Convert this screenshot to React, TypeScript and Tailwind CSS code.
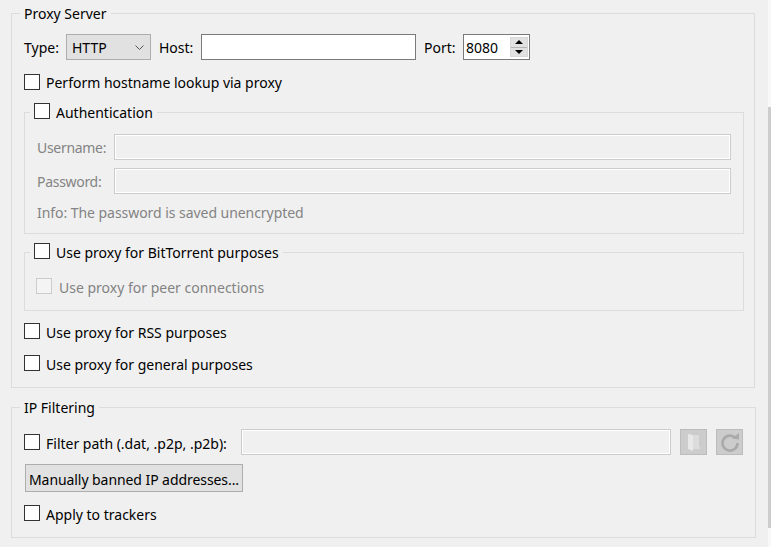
import type { ReactNode } from "react";

function Check({ label, dim }: { label: string; dim?: boolean }) {
  return (
    <label className={dim ? "flex h-5 items-center gap-[7px] text-[#838383]" : "flex h-5 items-center gap-[6px]"}>
      <span className={dim ? "h-4 w-4 shrink-0 border border-[#cccccc] bg-[#f4f4f4]" : "h-4 w-4 shrink-0 border border-[#333333] bg-white"}></span>
      <span className="h-5">{label}</span>
    </label>
  );
}

function Group({ title, className, children }: { title: ReactNode; className: string; children: ReactNode }) {
  return (
    <fieldset className={"border border-[#dcdcdc] " + className}>
      {title}
      {children}
    </fieldset>
  );
}

function DimInput({ className }: { className: string }) {
  return <div className={"h-[26px] border border-[#cccccc] bg-[#f0f0f0] shadow-[inset_0_0_0_1px_#ffffff] " + className}></div>;
}

export default function App() {
  return (
    <div className="relative h-[547px] w-[771px] overflow-hidden bg-[#f0f0f0] pl-[11px] pt-[3px] font-['Noto_Sans',sans-serif] text-[14px] leading-[22px] text-[#000000]">
      <Group
        className="h-[385px] w-[744px] pl-3 pr-[10px]"
        title={<legend className="-ml-1 h-5 px-1">Proxy Server</legend>}
      >
        <div className="mt-[11px] flex h-[26px] items-center">
          <span className="h-5 w-[42px]">Type:</span>
          <div className="flex h-[26px] w-[85px] items-center justify-between border border-[#adadad] bg-[#e1e1e1] pl-[5px] pr-[6px]">
            <span className="h-5">HTTP</span>
            <svg width="9" height="5" viewBox="0 0 9 5" fill="none" stroke="#555555">
              <path d="M0.5 0.5 L4.5 4.5 L8.5 0.5" />
            </svg>
          </div>
          <span className="ml-2 h-5 w-[42px]">Host:</span>
          <div className="h-[26px] w-[215px] border border-[#7a7a7a] bg-white"></div>
          <span className="ml-2 h-5 w-[39px]">Port:</span>
          <div className="flex h-[26px] w-[67px] items-center justify-between border border-[#7a7a7a] bg-white pl-[2px] pr-[1px]">
            <span className="h-5">8080</span>
            <div className="flex h-[20px] w-[18px] flex-col border border-[#d8d8d8] bg-[#e1e1e1]">
              <div className="flex flex-1 items-center justify-center border-b border-[#b5b5b5]">
                <svg width="8" height="4" viewBox="0 0 8 4" fill="#000000"><path d="M4 0 L8 4 L0 4 Z" /></svg>
              </div>
              <div className="flex flex-1 items-center justify-center">
                <svg width="8" height="4" viewBox="0 0 8 4" fill="#000000"><path d="M0 0 L8 0 L4 4 Z" /></svg>
              </div>
            </div>
          </div>
        </div>

        <div className="mt-3">
          <Check label="Perform hostname lookup via proxy" />
        </div>

        <Group
          className="mt-[9px] h-[133px] w-[720px] pl-3 pr-3"
          title={
            <legend className="-ml-[7px] h-[22px] px-1 leading-6">
              <Check label="Authentication" />
            </legend>
          }
        >
          <div className="mt-[11px] flex h-[26px] items-center text-[#838383]">
            <span className="h-5 w-[77px] tracking-[-0.3px]">Username:</span>
            <DimInput className="w-[617px]" />
          </div>
          <div className="mt-2 flex h-[26px] items-center text-[#838383]">
            <span className="h-5 w-[77px] tracking-[-0.3px]">Password:</span>
            <DimInput className="w-[617px]" />
          </div>
          <div className="mt-2 h-5 tracking-[-0.05px] text-[#838383]">Info: The password is saved unencrypted</div>
        </Group>

        <Group
          className="mt-[7px] h-[70px] w-[720px] pl-3 pr-3"
          title={
            <legend className="-ml-[7px] h-[22px] px-1 leading-6">
              <Check label="Use proxy for BitTorrent purposes" />
            </legend>
          }
        >
          <div className="-ml-px mt-[13px] leading-6">
            <Check dim label="Use proxy for peer connections" />
          </div>
        </Group>

        <div className="mt-[10px] leading-6">
          <Check label="Use proxy for RSS purposes" />
        </div>
        <div className="mt-3 leading-6">
          <Check label="Use proxy for general purposes" />
        </div>
      </Group>

      <Group
        className="mt-[9px] h-[141px] w-[744px] pl-3 pr-3"
        title={<legend className="-ml-1 h-5 px-1">IP Filtering</legend>}
      >
        <div className="mt-3 flex h-[26px] items-center leading-6">
          <div className="w-[217px]">
            <Check label="Filter path (.dat, .p2p, .p2b):" />
          </div>
          <DimInput className="w-[430px]" />
          <div className="ml-[9px] flex h-[26px] w-[27px] items-center justify-center border border-[#bcbcbc] bg-[#cccccc]">
            <svg width="14" height="20" viewBox="0 0 14 20">
              <path d="M1 2 L6 3 L6 19 L1 17 Z" fill="#e8e8e8" />
              <path d="M6 3 H12 V15 H13 V17 H6 Z" fill="#dcdcdc" />
            </svg>
          </div>
          <div className="ml-[9px] flex h-[26px] w-[27px] items-center justify-center border border-[#bcbcbc] bg-[#cccccc]">
            <svg width="20" height="20" viewBox="0 0 20 20" fill="none" stroke="#aaaaaa" strokeWidth="2.6">
              <path d="M15.5 6 A7.5 7.5 0 1 0 17.5 11" />
              <path d="M12 6.5 L19 1 V7.5 Z" fill="#aaaaaa" stroke="none" />
            </svg>
          </div>
        </div>
        <button className="ml-px mt-[9px] flex h-7 w-[218px] items-center justify-center border border-[#adadad] bg-[#e1e1e1] leading-6 tracking-[-0.07px]">
          <span className="h-5">Manually banned IP addresses...</span>
        </button>
        <div className="mt-[11px] leading-6">
          <Check label="Apply to trackers" />
        </div>
      </Group>

      <div className="absolute right-0 top-0 h-[547px] w-[3px] bg-[#f8f8f8]">
        <div className="mt-[107px] h-[421px] w-[3px] bg-[#cdcdcd]"></div>
      </div>
    </div>
  );
}
